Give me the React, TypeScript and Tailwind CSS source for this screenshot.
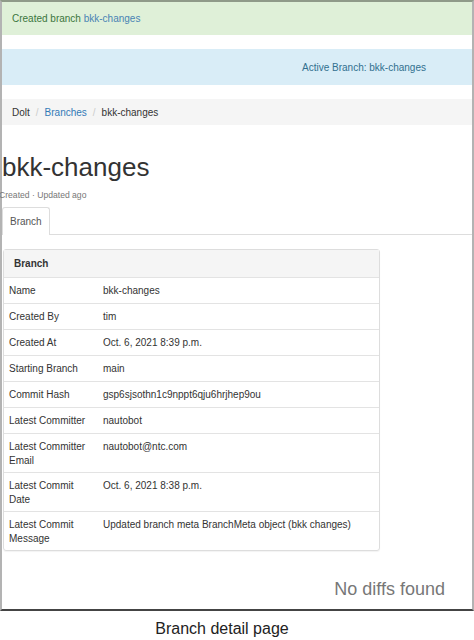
const rows: { label: string; value: string }[] = [
  { label: "Name", value: "bkk-changes" },
  { label: "Created By", value: "tim" },
  { label: "Created At", value: "Oct. 6, 2021 8:39 p.m." },
  { label: "Starting Branch", value: "main" },
  { label: "Commit Hash", value: "gsp6sjsothn1c9nppt6qju6hrjhep9ou" },
  { label: "Latest Committer", value: "nautobot" },
  { label: "Latest Committer Email", value: "nautobot@ntc.com" },
  { label: "Latest Commit Date", value: "Oct. 6, 2021 8:38 p.m." },
  { label: "Latest Commit Message", value: "Updated branch meta BranchMeta object (bkk changes)" },
];

function DetailRow({ label, value }: { label: string; value: string }) {
  const twoLines = label.length > 16;
  return (
    <div
      className={`flex border-t border-[#e3e3e3] text-[10px] leading-[14px] text-[#333] ${
        twoLines ? "pt-[6px] pb-[5px] h-[39px]" : "items-center h-[26px] pt-[1px]"
      }`}
    >
      <div className="w-[99px] shrink-0 pl-[5px] pr-2">{label}</div>
      <div>{value}</div>
    </div>
  );
}

export default function App() {
  return (
    <div
      className="w-[474px] h-[640px] bg-white overflow-hidden"
      style={{ fontFamily: '"Liberation Sans", Arial, sans-serif' }}
    >
      <div className="h-[611px] border-t-2 border-t-[#8f9a89] border-x-2 border-x-[#b3b3b3] border-b-2 border-b-[#444]">
        {/* alerts */}
        <div className="h-[33px] bg-[#dff0d8] flex items-center pl-[10px] text-[10px] text-[#3c763d]">
          Created branch&nbsp;<span className="text-[#4a84b4]">bkk-changes</span>
        </div>
        <div className="mt-[14px] h-[36px] bg-[#d9edf7] flex items-center justify-end pr-[46px] text-[10px] text-[#31708f]">
          Active Branch: bkk-changes
        </div>

        {/* breadcrumb */}
        <nav className="mt-[14px] h-[26px] bg-[#f5f5f5] flex items-center pl-[10px] text-[10px] text-[#333]">
          <span>Dolt</span>
          <span className="px-[6px] text-[#ccc]">/</span>
          <span className="text-[#337ab7]">Branches</span>
          <span className="px-[6px] text-[#ccc]">/</span>
          <span>bkk-changes</span>
        </nav>

        <h1 className="mt-[27px] text-[26px] leading-[30px] text-[#333] font-normal">bkk-changes</h1>
        <div className="mt-[8px] text-[8.6px] leading-[10px] text-[#777] -ml-[3px]">Created · Updated ago</div>

        {/* tabs */}
        <div className="mt-[7px] flex items-end">
          <div className="h-[28px] px-[7px] flex items-center border border-b-0 border-[#ddd] rounded-t-[3px] text-[10px] text-[#555] bg-white">
            Branch
          </div>
          <div className="flex-1 border-b border-[#ddd]" />
        </div>

        {/* panel */}
        <div className="mt-[14px] ml-[1px] w-[377px] border border-[#ddd] rounded-[3px] shadow-[0_1px_1px_rgba(0,0,0,0.05)]">
          <div className="h-[27px] bg-[#f5f5f5] flex items-center pl-[10px] text-[10px] font-bold text-[#333]">
            Branch
          </div>
          {rows.map((r) => (
            <DetailRow key={r.label} label={r.label} value={r.value} />
          ))}
        </div>

        <div className="mt-[27px] pr-[27px] text-right text-[18px] leading-[22px] text-[#777]">No diffs found</div>
      </div>

      <div className="pt-[9px] pr-[30px] text-center text-[16px] leading-[18px] text-[#222]">Branch detail page</div>
    </div>
  );
}
